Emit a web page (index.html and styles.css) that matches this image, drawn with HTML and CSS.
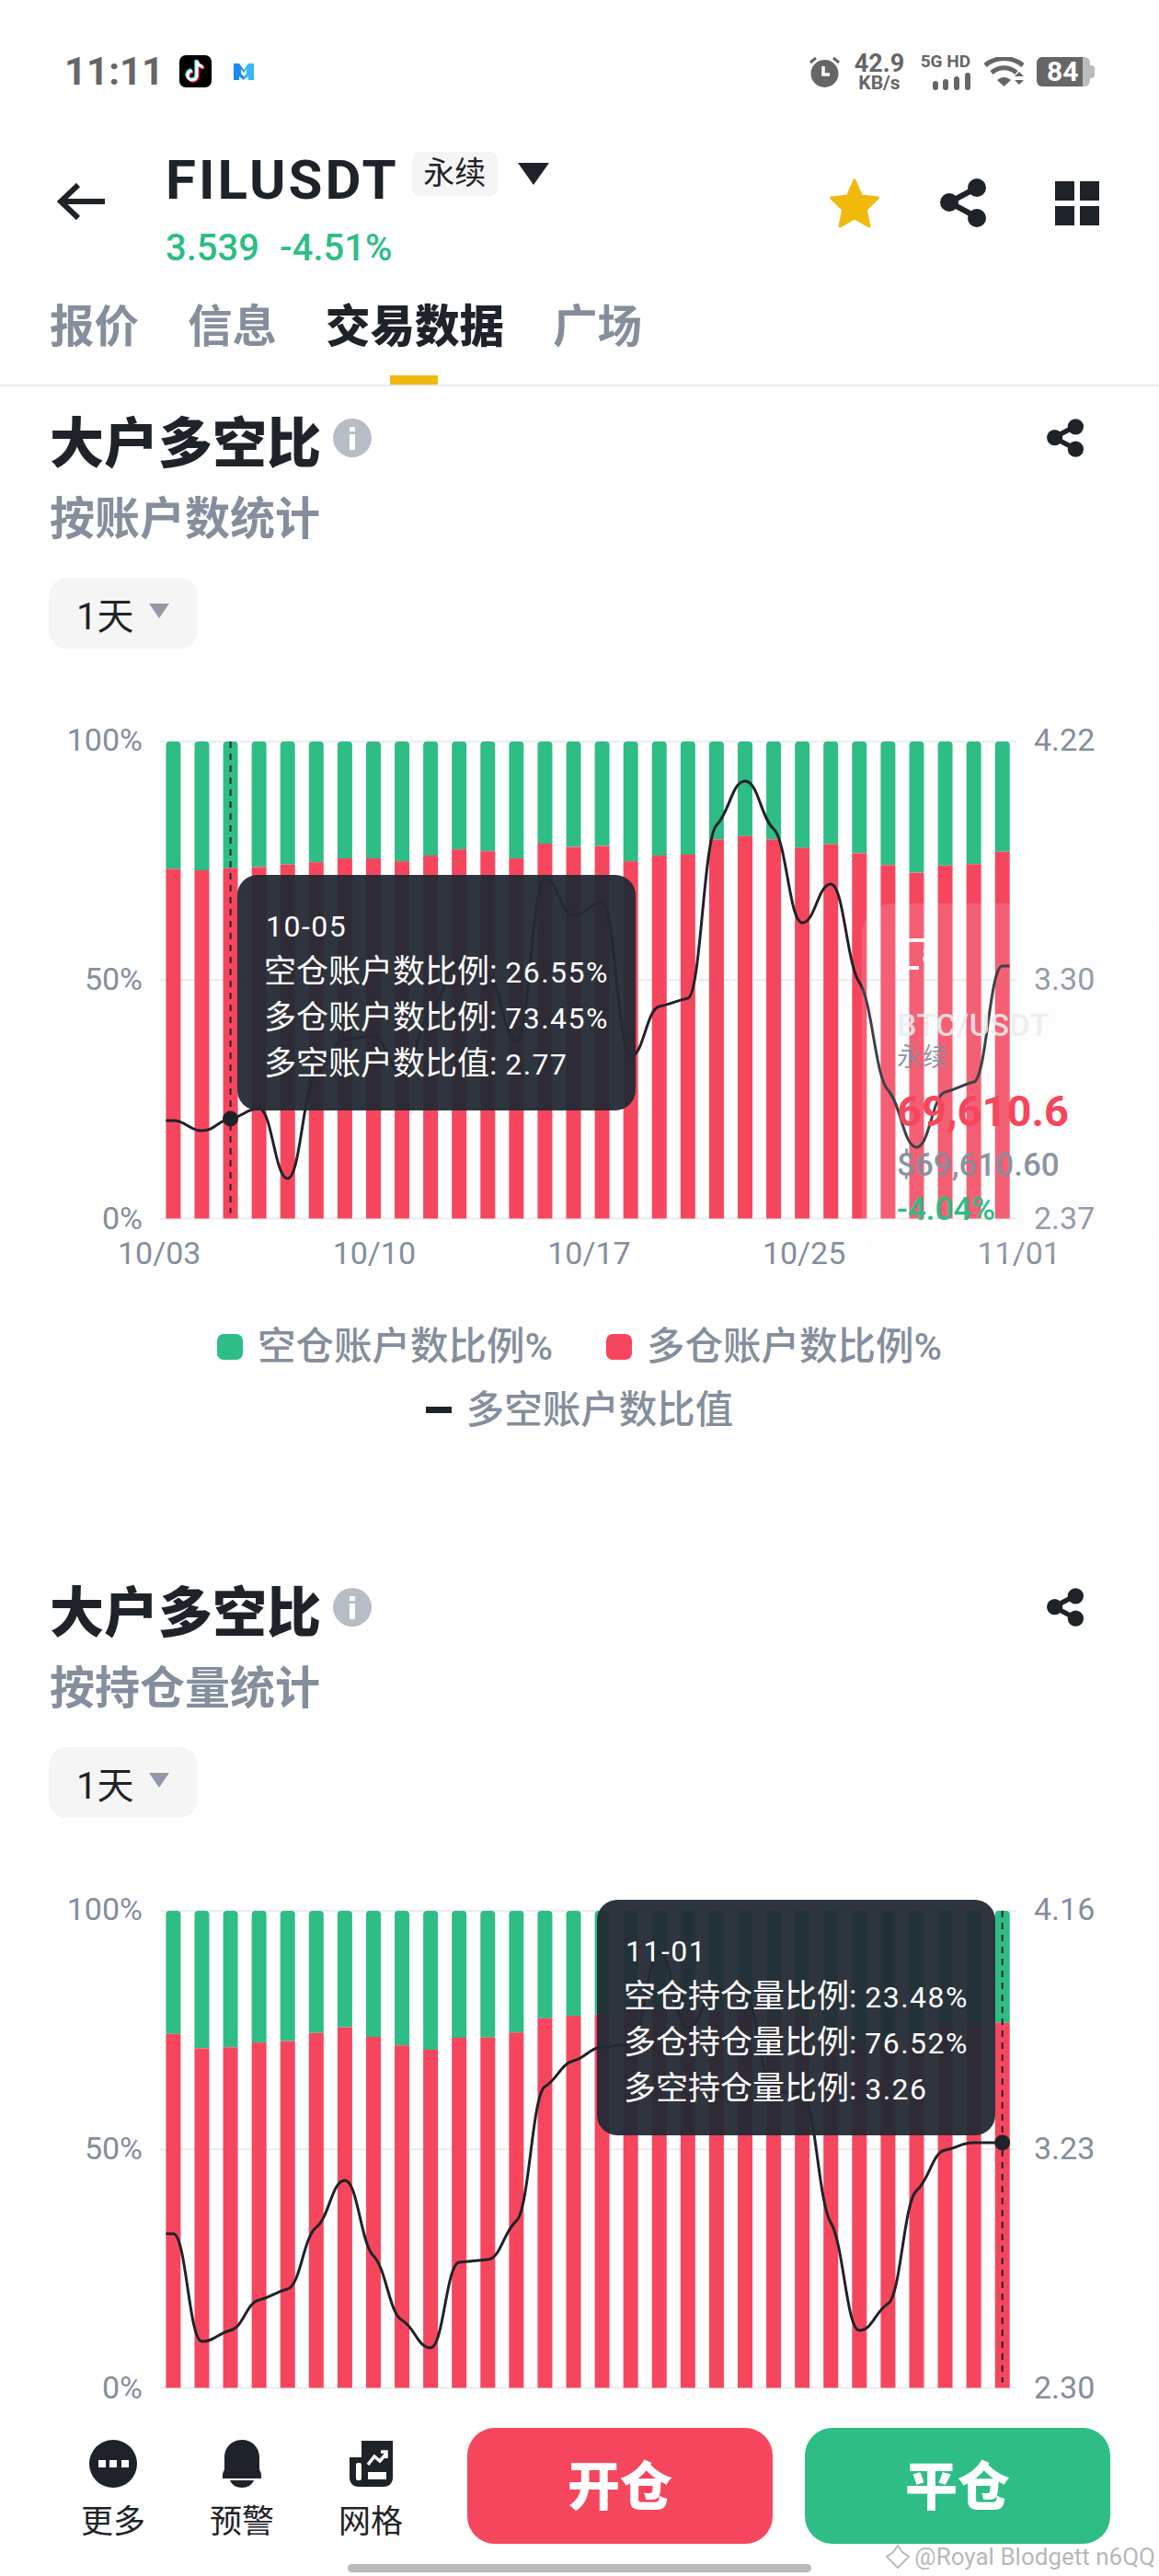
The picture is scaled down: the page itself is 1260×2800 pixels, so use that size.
FILE: index.html
```html
<html>
<head>
  <meta charset="utf-8">
  <link rel="stylesheet" href="styles.css">
  <script src="chart.js"></script>
</head>
<body>
<div class="app">

  <div class="status">
    <span class="clock">11:11</span>
    <svg class="tiktok" viewBox="0 0 35 35" width="35" height="35">
      <rect width="35" height="35" rx="7" fill="#000"/>
      <path d="M19 6v16a5 5 0 1 1-5-5M19 6c1 4 3 6 7 7" fill="none" stroke="#25f4ee" stroke-width="3.4" transform="translate(-1 -1)"/>
      <path d="M19 6v16a5 5 0 1 1-5-5M19 6c1 4 3 6 7 7" fill="none" stroke="#fe2c55" stroke-width="3.4" transform="translate(1 1)"/>
      <path d="M19 6v16a5 5 0 1 1-5-5M19 6c1 4 3 6 7 7" fill="none" stroke="#fff" stroke-width="3"/>
    </svg>
    <svg class="mark" viewBox="0 0 24 20" width="24" height="20">
      <path d="M1 1h6l5 7v11l-5-4v4H1z" fill="#1e88f0"/>
      <path d="M23 1h-6l-5 7v11l5-4v4h6z" fill="#38b6f5"/>
      <path d="M12 11l-3-4v5l3 3 3-3V7z" fill="#fff"/>
    </svg>
    <div class="status-right">
      <svg viewBox="0 0 33 34" width="33" height="34">
        <circle cx="16.500" cy="19" r="15" fill="#666"/>
        <path d="M15 11v9h7" fill="none" stroke="#fff" stroke-width="3.500"/>
        <path d="M1 7l6-5M32 7l-6-5" stroke="#666" stroke-width="3"/>
      </svg>
      <div class="net"><span class="net-a">42.9</span><span class="net-b">KB/s</span></div>
      <div class="cell">
        <span class="cell-name">5G HD</span>
        <svg viewBox="0 0 41 19" width="41" height="19">
          <rect x="0" y="9" width="6" height="10" rx="3" fill="#666"/>
          <rect x="11" y="7" width="6" height="12" rx="3" fill="#666"/>
          <rect x="23" y="4" width="6" height="15" rx="3" fill="#666"/>
          <rect x="35" y="0" width="6" height="19" rx="3" fill="#666"/>
        </svg>
      </div>
      <svg viewBox="0 0 43 33" width="43" height="33">
        <path d="M1 9c12-10 29-10 41 0M8 17c8-7 19-7 27 0" fill="none" stroke="#666" stroke-width="5"/>
        <path d="M14 25c5-4 10-4 15 0l-7.500 7z" fill="#666"/>
        <path d="M33 21l5-5 5 5zM33 25l5 5 5-5z" fill="#666"/>
      </svg>
      <div class="battery"><span class="battery-num">84</span></div>
    </div>
  </div>

  <div class="head">
    <svg class="back" viewBox="0 0 52 40" width="52" height="40">
      <path d="M52 20H4M23 2L4 20l19 18" fill="none" stroke="#1e2329" stroke-width="6"/>
    </svg>
    <div class="symbol">
      <div class="symbol-top">
        <span class="symbol-name">FILUSDT</span>
        <span class="badge">永续</span>
        <span class="caret"></span>
      </div>
      <div class="symbol-price"><span>3.539</span><span>-4.51%</span></div>
    </div>
    <div class="head-actions">
      <svg class="star" viewBox="0 0 53 53" width="56" height="56">
        <path d="M26.500 3l7 16 17 2-12.500 12 3.500 17-15-8.500-15 8.500 3.500-17L2.500 21l17-2z" fill="#f0b90b" stroke="#f0b90b" stroke-width="3" stroke-linejoin="round"/>
      </svg>
      <svg viewBox="0 0 51 53" width="51" height="53">
        <path d="M10 26L40 10M10 26l30 16" stroke="#1e2329" stroke-width="6"/>
        <circle cx="10" cy="26" r="10" fill="#1e2329"/>
        <circle cx="40" cy="10" r="10" fill="#1e2329"/>
        <circle cx="40" cy="43" r="10" fill="#1e2329"/>
      </svg>
      <div class="tiles"><i></i><i></i><i></i><i></i></div>
    </div>
  </div>

  <div class="tabs">
    <span class="tab">报价</span>
    <span class="tab">信息</span>
    <span class="tab tab-on">交易数据</span>
    <span class="tab">广场</span>
  </div>

  <div class="main">

    <div class="section">
      <div class="sec-head">
        <span class="sec-title">大户多空比</span>
        <svg class="info" viewBox="0 0 42 42" width="42" height="42">
          <circle cx="21" cy="21" r="21" fill="#b7bdc6"/>
          <rect x="18" y="9" width="6" height="5" fill="#fff"/>
          <rect x="18" y="17" width="6" height="17" fill="#fff"/>
        </svg>
        <svg class="sec-share" viewBox="0 0 51 53" width="40" height="42">
          <path d="M10 26L40 10M10 26l30 16" stroke="#1e2329" stroke-width="7"/>
          <circle cx="11" cy="26" r="11" fill="#1e2329"/>
          <circle cx="40" cy="11" r="11" fill="#1e2329"/>
          <circle cx="40" cy="42" r="11" fill="#1e2329"/>
        </svg>
      </div>
      <div class="sec-sub">按账户数统计</div>
      <div class="pill"><span>1天</span><i class="pill-caret"></i></div>
      <div class="chart">
        <div class="y-axis y-left"><span>100%</span><span>50%</span><span>0%</span></div>
        <svg class="plot" id="plot-a" width="931" height="520" viewBox="0 0 931 520"></svg>
        <div class="y-axis"><span>4.22</span><span>3.30</span><span>2.37</span></div>
        <div class="tip tip-a">
          <div>10-05</div>
          <div>空仓账户数比例: <b>26.55%</b></div>
          <div>多仓账户数比例: <b>73.45%</b></div>
          <div>多空账户数比值: <b>2.77</b></div>
        </div>
        <div class="ghost">
          <svg class="ghost-logo" viewBox="0 0 36 34" width="36" height="34">
            <path d="M3 0h32v4H7v26h12v4H3zM24 12h9l-6 8 7 14h-6l-5-12 3-6h-2z" fill="#fff"/>
          </svg>
          <div class="ghost-pair">BTC/USDT</div>
          <div class="ghost-kind">永续</div>
          <div class="ghost-price">69,610.6</div>
          <div class="ghost-usd">$69,610.60</div>
          <div class="ghost-chg">-4.04%</div>
        </div>
      </div>
      <div class="x-axis"><span>10/03</span><span>10/10</span><span>10/17</span><span>10/25</span><span>11/01</span></div>
      <div class="legend">
        <span class="leg"><i class="swatch sw-green"></i>空仓账户数比例%</span>
        <span class="leg"><i class="swatch sw-red"></i>多仓账户数比例%</span>
        <span class="leg"><i class="swatch sw-line"></i>多空账户数比值</span>
      </div>
    </div>

    <div class="section">
      <div class="sec-head">
        <span class="sec-title">大户多空比</span>
        <svg class="info" viewBox="0 0 42 42" width="42" height="42">
          <circle cx="21" cy="21" r="21" fill="#b7bdc6"/>
          <rect x="18" y="9" width="6" height="5" fill="#fff"/>
          <rect x="18" y="17" width="6" height="17" fill="#fff"/>
        </svg>
        <svg class="sec-share" viewBox="0 0 51 53" width="40" height="42">
          <path d="M10 26L40 10M10 26l30 16" stroke="#1e2329" stroke-width="7"/>
          <circle cx="11" cy="26" r="11" fill="#1e2329"/>
          <circle cx="40" cy="11" r="11" fill="#1e2329"/>
          <circle cx="40" cy="42" r="11" fill="#1e2329"/>
        </svg>
      </div>
      <div class="sec-sub">按持仓量统计</div>
      <div class="pill"><span>1天</span><i class="pill-caret"></i></div>
      <div class="chart">
        <div class="y-axis y-left"><span>100%</span><span>50%</span><span>0%</span></div>
        <svg class="plot" id="plot-b" width="931" height="520" viewBox="0 0 931 520"></svg>
        <div class="y-axis"><span>4.16</span><span>3.23</span><span>2.30</span></div>
        <div class="tip tip-b">
          <div>11-01</div>
          <div>空仓持仓量比例: <b>23.48%</b></div>
          <div>多仓持仓量比例: <b>76.52%</b></div>
          <div>多空持仓量比例: <b>3.26</b></div>
        </div>
      </div>
    </div>

  </div>

  <div class="bottom">
    <div class="bottom-row">
      <div class="tools">
        <div class="tool">
          <svg viewBox="0 0 52 52" width="52" height="52">
            <circle cx="26" cy="26" r="26" fill="#1e2329"/>
            <rect x="10" y="22" width="8" height="8" fill="#fff"/>
            <rect x="22" y="22" width="8" height="8" fill="#fff"/>
            <rect x="35" y="22" width="8" height="8" fill="#fff"/>
          </svg>
          <span>更多</span>
        </div>
        <div class="tool">
          <svg viewBox="0 0 46 52" width="46" height="52">
            <path d="M2 38c0-3 2-4 2-7V19C4 8 12 0 23 0s19 8 19 19v12c0 3 2 4 2 7v4H2z" fill="#1e2329"/>
            <path d="M10 44h26c-2 5-7 8-13 8s-11-3-13-8z" fill="#1e2329"/>
          </svg>
          <span>预警</span>
        </div>
        <div class="tool">
          <svg viewBox="0 0 47 50" width="47" height="50">
            <path d="M13 0h34v40c0 6-4 10-10 10H10C4 50 0 46 0 40V18h13z" fill="#1e2329"/>
            <rect x="7" y="24" width="6" height="19" rx="2" fill="#fff"/>
            <rect x="20" y="34" width="20" height="8" fill="#fff"/>
            <path d="M20 26l7-9 6 5 7-8M34 12h6v7" fill="none" stroke="#fff" stroke-width="3.500"/>
          </svg>
          <span>网格</span>
        </div>
      </div>
      <div class="trade trade-open">开仓</div>
      <div class="trade trade-close">平仓</div>
    </div>
    <div class="home-bar"></div>
    <div class="watermark"><svg viewBox="0 0 28 28" width="28" height="28"><path d="M14 2l5 7 7 5-12 12L2 14l7-5z" fill="none" stroke="#bbb" stroke-width="2"/></svg>@Royal Blodgett n6QQ</div>
  </div>

</div>
</body>
</html>
```

FILE: styles.css
```css
* {
  box-sizing: border-box;
}
html, body {
  margin: 0;
  padding: 0;
  background: #fff;
}
body {
  font-family: Roboto, "Noto Sans CJK SC", sans-serif;
  color: #1e2329;
}
.app {
  width: 1260px;
  height: 2800px;
  display: flex;
  flex-direction: column;
  overflow: hidden;
}

/* status bar */
.status {
  height: 165px;
  padding: 58px 70px 0;
  display: flex;
  align-items: flex-start;
  color: #666;
}
.clock {
  font-size: 42px;
  font-weight: 700;
  line-height: 40px;
  width: 125px;
}
.tiktok {
  margin-top: 2px;
}
.mark {
  margin: 10px 0 0 23px;
}
.status-right {
  margin-left: auto;
  display: flex;
  align-items: center;
  height: 40px;
}
.net {
  margin-left: 16px;
  width: 54px;
  display: flex;
  flex-direction: column;
  align-items: center;
  font-weight: 700;
}
.net-a {
  font-size: 27px;
  line-height: 24px;
}
.net-b {
  font-size: 21px;
  line-height: 18px;
}
.cell {
  margin: 0 15px 0 16px;
  width: 56px;
  display: flex;
  flex-direction: column;
  align-items: flex-end;
  gap: 4px;
}
.cell-name {
  font-size: 19px;
  font-weight: 700;
  line-height: 16px;
  white-space: nowrap;
}
.battery {
  position: relative;
  margin-left: 14px;
  width: 58px;
  height: 32px;
  border-radius: 6px;
  background: linear-gradient(90deg, #666 86%, #bbb 86%);
  padding-left: 11px;
  margin-right: 5px;
}
.battery::after {
  content: "";
  position: absolute;
  right: -5px;
  top: 9px;
  width: 5px;
  height: 14px;
  border-radius: 0 4px 4px 0;
  background: #bbb;
}
.battery-num {
  font-size: 30px;
  font-weight: 700;
  line-height: 32px;
  color: #fff;
}

/* symbol header */
.head {
  height: 152px;
  padding: 0 65px 0 62px;
  display: flex;
  align-items: flex-start;
}
.back {
  margin-top: 34px;
}
.symbol {
  margin-left: 66px;
}
.symbol-top {
  display: flex;
  align-items: flex-start;
  height: 82px;
}
.symbol-name {
  font-size: 60px;
  font-weight: 700;
  letter-spacing: 3px;
  line-height: 62px;
}
.badge {
  margin-left: 14px;
  width: 93px;
  height: 48px;
  background: #f5f5f5;
  border-radius: 8px;
  text-align: center;
  font-size: 34px;
  line-height: 46px;
}
.caret {
  margin: 12px 0 0 22px;
  border-left: 17px solid transparent;
  border-right: 17px solid transparent;
  border-top: 24px solid #1e2329;
}
.symbol-price {
  display: flex;
  gap: 22px;
  color: #2ebd85;
  font-size: 40px;
  font-weight: 500;
  line-height: 46px;
}
.head-actions {
  margin: 29px 0 0 auto;
  display: flex;
  align-items: center;
  gap: 68px;
}
.star {
  margin: -3px -3px -3px 0;
}
.tiles {
  margin-left: 6px;
  display: grid;
  grid-template-columns: 21px 21px;
  grid-auto-rows: 21px;
  gap: 6px;
}
.tiles i {
  background: #1e2329;
}

/* tabs */
.tabs {
  height: 103px;
  padding-left: 54px;
  display: flex;
  gap: 53px;
  border-bottom: 2px solid #eaecef;
}
.tab {
  position: relative;
  font-size: 48.5px;
  font-weight: 700;
  line-height: 78px;
  color: #848e9c;
}
.tab-on {
  color: #1e2329;
  font-weight: 900;
}
.tab-on::after {
  content: "";
  position: absolute;
  left: 70px;
  width: 52px;
  top: 91px;
  height: 10px;
  background: #f0b90b;
}

/* sections */
.main {
  flex: 1;
  overflow: hidden;
}
.section {
  height: 1271px;
  padding: 28px 82px 0 54px;
}
.sec-head {
  display: flex;
  align-items: center;
  height: 70px;
}
.sec-title {
  font-size: 59px;
  font-weight: 900;
  line-height: 70px;
}
.info {
  margin-left: 13px;
  margin-top: -14px;
}
.sec-share {
  margin-left: auto;
  margin-top: -14px;
}
.sec-sub {
  margin-top: 17px;
  font-size: 49px;
  font-weight: 700;
  line-height: 60px;
  color: #848e9c;
}
.pill {
  margin: 33px 0 0 -1px;
  width: 162px;
  height: 77px;
  border-radius: 20px;
  background: #f5f5f5;
  padding-left: 30px;
  display: flex;
  align-items: center;
  font-size: 40px;
}
.pill-caret {
  margin: -6px 0 0 17px;
  border-left: 11px solid transparent;
  border-right: 11px solid transparent;
  border-top: 16px solid #929aa5;
}

/* chart */
.chart {
  position: relative;
  margin-top: 100px;
  display: grid;
  grid-template-columns: 101px 931px auto;
  column-gap: 19px;
  width: 1124px;
  height: 520px;
}
.plot {
  display: block;
  overflow: visible;
}
.y-axis {
  display: flex;
  flex-direction: column;
  justify-content: space-between;
  margin: -21px 0 -19px;
  font-size: 34px;
  line-height: 40px;
  color: #848e9c;
}
.y-left {
  text-align: right;
}
.tip {
  position: absolute;
  width: 433px;
  height: 256px;
  padding: 31px 0 0 29px;
  border-radius: 22px;
  background: rgba(35, 42, 52, 0.95);
  color: #fff;
  font-size: 35px;
  line-height: 50px;
  white-space: nowrap;
}
.tip div:first-child {
  font-size: 32px;
  letter-spacing: 1.5px;
  padding-left: 2px;
}
.tip b {
  font-family: Roboto, sans-serif;
  font-size: 32px;
  font-weight: 400;
  letter-spacing: 1.5px;
}
.tip-a {
  left: 204px;
  top: 146px;
}
.tip-b {
  left: 595px;
  top: -11px;
}
.ghost {
  position: absolute;
  left: 883px;
  top: 177px;
  width: 323px;
  height: 384px;
  padding: 38px 0 0 38px;
  border-radius: 34px;
  background: rgba(240, 240, 245, 0.15);
  white-space: nowrap;
}
.ghost-logo {
  display: block;
  margin-left: 5px;
}
.ghost-pair {
  margin-top: 38px;
  font-size: 34px;
  font-weight: 500;
  line-height: 44px;
  letter-spacing: 0.5px;
  color: rgba(234, 236, 239, 0.9);
}
.ghost-kind {
  margin-top: -6px;
  font-size: 28px;
  line-height: 40px;
  color: rgba(132, 142, 156, 0.9);
}
.ghost-price {
  margin-top: 10px;
  font-size: 47px;
  font-weight: 700;
  line-height: 56px;
  color: #f6465d;
}
.ghost-usd {
  margin-top: 9px;
  font-size: 35px;
  font-weight: 500;
  line-height: 44px;
  color: rgba(132, 142, 156, 0.95);
}
.ghost-chg {
  margin-top: 4px;
  font-size: 35px;
  font-weight: 500;
  line-height: 44px;
  color: #2ebd85;
}
.x-axis {
  margin: 17px 0 0 74px;
  width: 1025px;
  display: flex;
  justify-content: space-between;
  font-size: 34px;
  line-height: 40px;
  color: #848e9c;
}
.legend {
  margin: 47px 0 0 76px;
  width: 1000px;
  display: flex;
  flex-wrap: wrap;
  justify-content: center;
  column-gap: 58px;
  font-size: 41.5px;
  font-weight: 500;
  line-height: 69px;
  color: #848e9c;
}
.leg {
  display: flex;
  align-items: center;
}
.swatch {
  width: 28px;
  height: 28px;
  border-radius: 7px;
  margin-right: 16px;
}
.sw-green {
  background: #2ebd85;
}
.sw-red {
  background: #f6465d;
}
.sw-line {
  height: 7px;
  border-radius: 0;
  background: #1e2329;
}

/* bottom bar */
.bottom {
  position: relative;
  height: 180px;
  background: #fff;
  padding: 19px 52px 0 53px;
}
.bottom-row {
  display: flex;
  height: 126px;
}
.tools {
  display: flex;
  width: 420px;
  margin-right: 35px;
}
.tool {
  width: 140px;
  display: flex;
  flex-direction: column;
  align-items: center;
  padding-top: 13px;
  font-size: 35px;
  line-height: 44px;
}
.tool svg {
  height: 52px;
  margin-bottom: 16px;
}
.trade {
  width: 332px;
  height: 126px;
  border-radius: 30px;
  color: #fff;
  font-size: 57px;
  font-weight: 900;
  line-height: 130px;
  text-align: center;
}
.trade-open {
  background: #f6465d;
  margin-right: 35px;
}
.trade-close {
  background: #2ebd85;
}
.home-bar {
  margin: 22px auto 0 325px;
  width: 504px;
  height: 9px;
  border-radius: 5px;
  background: #bbb;
}
.watermark {
  position: absolute;
  right: 4px;
  bottom: 6px;
  display: flex;
  align-items: center;
  gap: 4px;
  font-size: 26px;
  line-height: 30px;
  color: rgba(160, 160, 160, 0.75);
  white-space: nowrap;
}
```

FILE: chart.js
```js
var GREEN = '#2ebd85', RED = '#f6465d', INK = '#1e2329', GRID = '#eaecef';
var BAR_W = 16, STEP = 31.08, FIRST = 14.4;
var TOP = 1, BOTTOM = 519.5;

var charts = {
  'plot-a': {
    active: 2,
    longs: [73.3, 73.0, 73.45, 73.7, 74.2, 74.7, 75.5, 75.5, 74.9, 76.1, 77.4, 77.0, 75.5, 78.6, 77.9,
            78.1, 74.9, 76.1, 76.3, 79.5, 80.2, 79.5, 77.7, 78.5, 76.6, 74.1, 72.5, 74.0, 74.3, 76.9],
    ratio: [413, 424, 411, 400, 476, 362, 325, 321, 362, 295, 242, 255, 327, 150, 190,
            176, 343, 289, 280, 92, 44, 96, 198, 156, 263, 380, 442, 382, 371, 245]
  },
  'plot-b': {
    active: 29,
    longs: [74.2, 71.2, 71.4, 72.4, 72.7, 74.4, 75.6, 73.6, 71.8, 70.9, 73.4, 73.5, 74.5, 77.5, 78.0,
            78.3, 79.1, 79.1, 78.9, 78.8, 78.8, 77.5, 77.5, 71.7, 71.7, 73.0, 74.3, 76.3, 76.3, 76.52],
    ratio: [352, 469, 457, 424, 412, 345, 294, 376, 446, 476, 383, 380, 338, 192, 164,
            149, 146, 46, 129, 87, 94, 197, 201, 340, 457, 428, 305, 261, 253, 253]
  }
};

function el(svg, name, attrs) {
  var node = document.createElementNS('http://www.w3.org/2000/svg', name);
  for (var k in attrs) node.setAttribute(k, attrs[k]);
  svg.appendChild(node);
  return node;
}

function centerX(i) {
  return FIRST + STEP * i;
}

// monotone cubic with short tangents, so the curve sits flat at each data point
function smoothPath(ys) {
  var n = ys.length, slopes = [], tangents = [];
  for (var i = 0; i < n - 1; i++) slopes[i] = (ys[i + 1] - ys[i]) / STEP;
  tangents[0] = 0;
  tangents[n - 1] = 0;
  for (var j = 1; j < n - 1; j++) {
    var a = slopes[j - 1], b = slopes[j];
    tangents[j] = a * b <= 0 ? 0 : 0.8 * a * b / (a + b);
  }
  var h = STEP * 0.45;
  var d = 'M' + (centerX(0) - BAR_W / 2) + ' ' + ys[0] + 'H' + centerX(0);
  for (var m = 0; m < n - 1; m++) {
    d += 'C' + (centerX(m) + h) + ' ' + (ys[m] + tangents[m] * h) + ' ' +
         (centerX(m + 1) - h) + ' ' + (ys[m + 1] - tangents[m + 1] * h) + ' ' +
         centerX(m + 1) + ' ' + ys[m + 1];
  }
  return d + 'H' + (centerX(n - 1) + BAR_W / 2);
}

function drawChart(id, data) {
  var svg = document.getElementById(id);
  var span = BOTTOM - TOP;

  [TOP, (TOP + BOTTOM) / 2, BOTTOM].forEach(function(y) {
    el(svg, 'line', {x1: 0, x2: 931, y1: y, y2: y, stroke: GRID, 'stroke-width': 2});
  });

  data.longs.forEach(function(pct, i) {
    var x = centerX(i) - BAR_W / 2;
    var split = BOTTOM - span * pct / 100;
    el(svg, 'path', {
      d: 'M' + x + ' ' + split + 'V' + (TOP + 4) + 'q0-4 4-4h8q4 0 4 4V' + split + 'z',
      fill: GREEN
    });
    el(svg, 'rect', {x: x, y: split, width: BAR_W, height: BOTTOM - split, fill: RED});
  });

  el(svg, 'path', {d: smoothPath(data.ratio), fill: 'none', stroke: INK, 'stroke-width': 3});

  var ax = centerX(data.active);
  el(svg, 'line', {
    x1: ax, x2: ax, y1: TOP, y2: BOTTOM - 6,
    stroke: INK, 'stroke-width': 2, 'stroke-dasharray': '7 6'
  });
  el(svg, 'circle', {cx: ax, cy: data.ratio[data.active], r: 8.5, fill: INK});
}

window.onload = function() {
  for (var id in charts) drawChart(id, charts[id]);
};
```
